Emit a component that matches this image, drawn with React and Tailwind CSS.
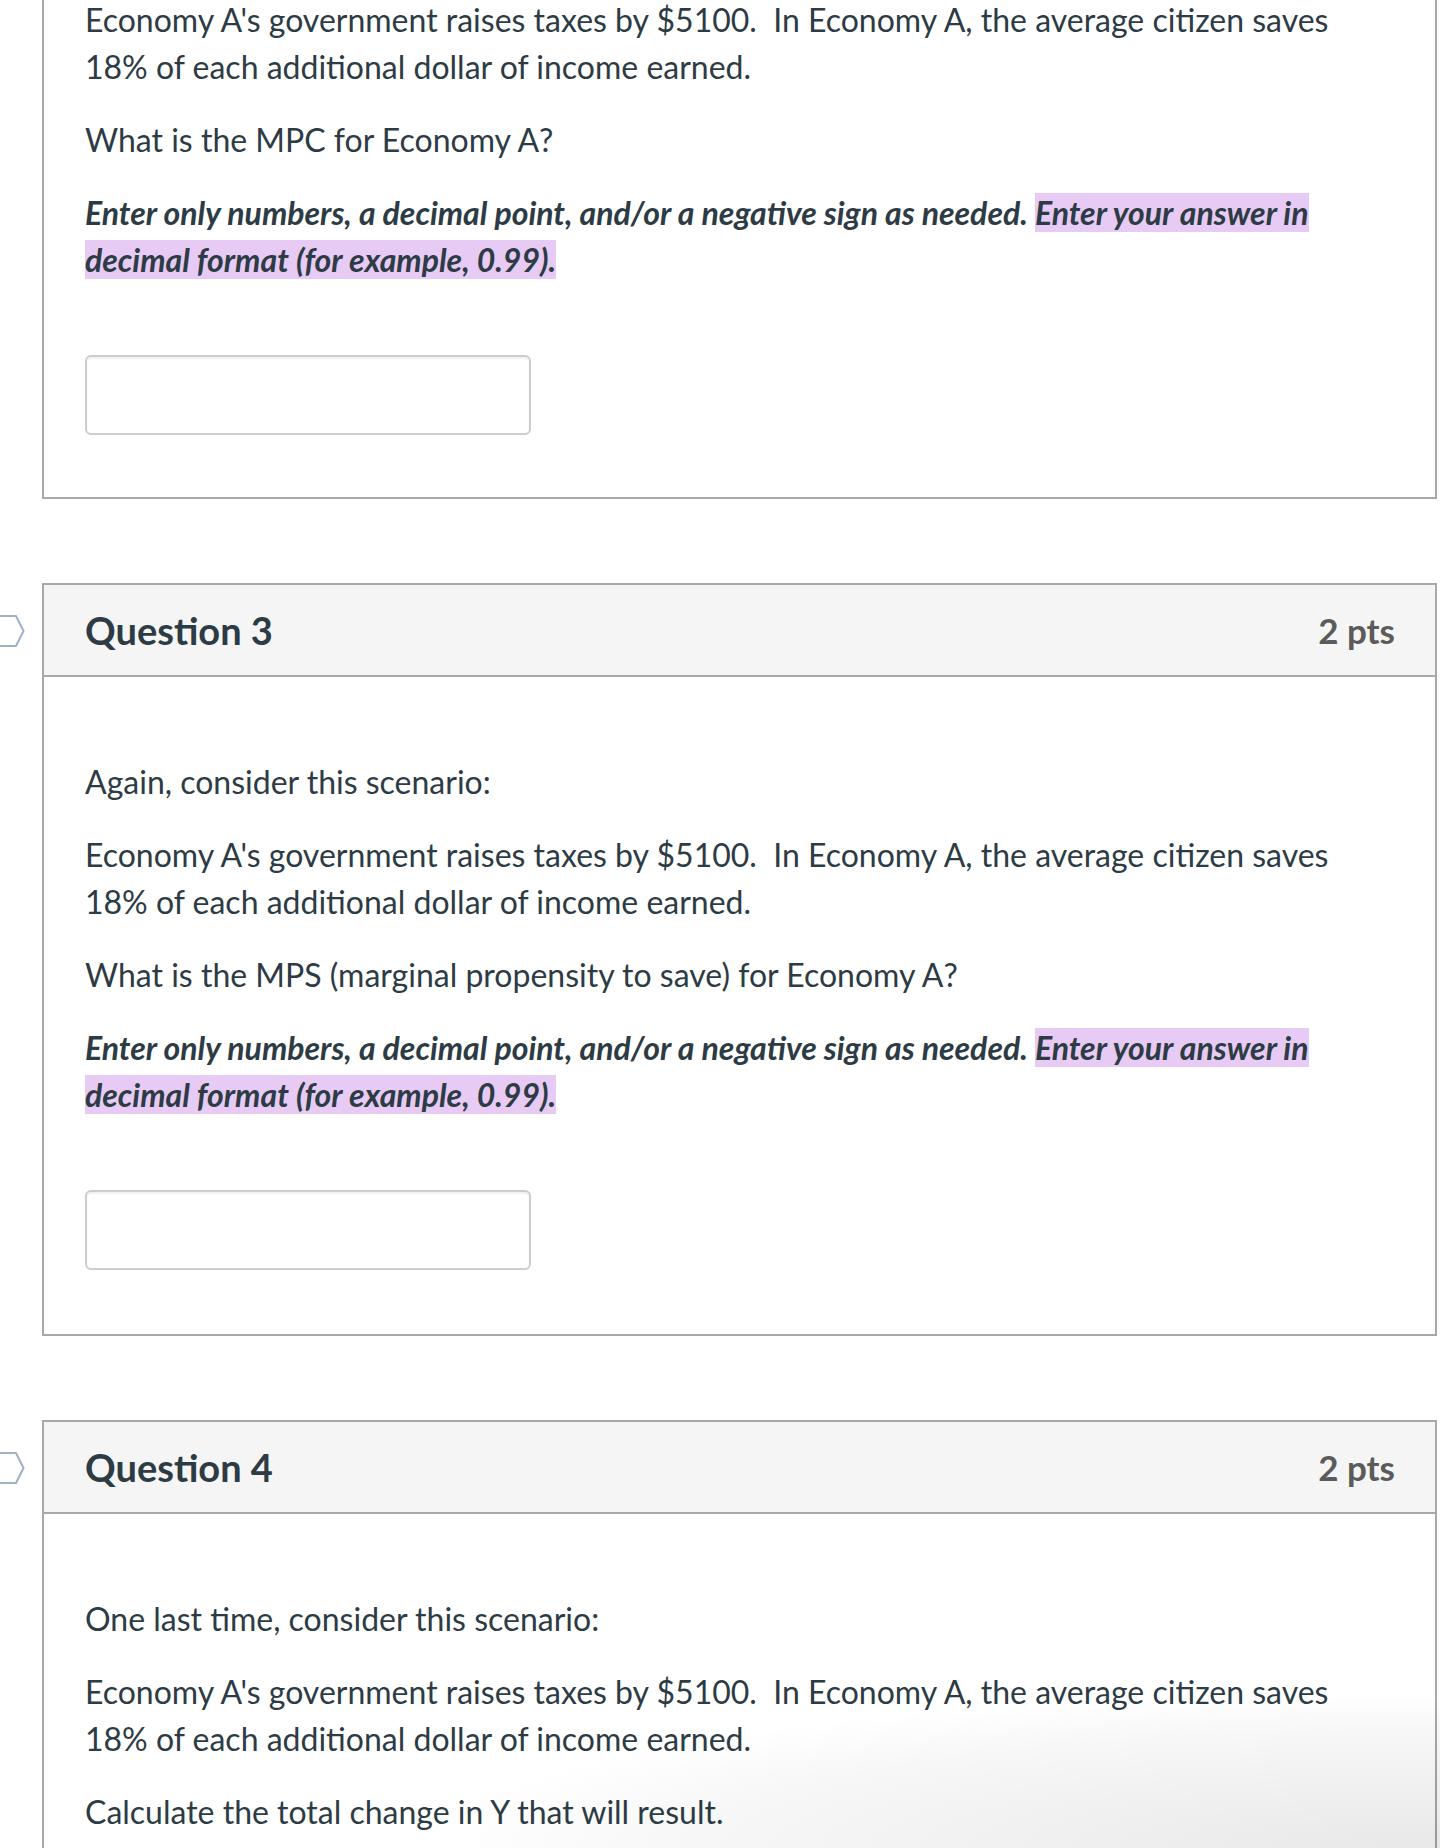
const TEXT = "text-[32px] leading-[47px] text-[#2d3b45]";

function Flag() {
  return (
    <svg className="absolute left-0 top-1/2 -translate-y-1/2" width="28" height="34" viewBox="0 0 28 34">
      <polygon points="-20,2 16,2 23.5,17 16,32 -20,32" fill="#ffffff" stroke="#9fb1c4" strokeWidth="2" strokeLinejoin="round" />
    </svg>
  );
}

function Instructions() {
  return (
    <p className={`${TEXT} font-bold italic`}>
      Enter only numbers, a decimal point, and/or a negative sign as needed.{" "}
      <span className="bg-[#e7cbf4] [box-decoration-break:clone]">
        Enter your answer in decimal format (for example, 0.99).
      </span>
    </p>
  );
}

function Scenario() {
  return (
    <p className={`${TEXT} mb-[26px]`}>
      Economy A's government raises taxes by $5100.&nbsp; In Economy A, the average citizen saves 18% of each additional dollar of income earned.
    </p>
  );
}

function AnswerBox() {
  return (
    <div className="mt-[72px] w-[446px] h-[80px] rounded-[6px] border-2 border-[#cdcdcd] bg-white shadow-[inset_0_2px_2px_rgba(0,0,0,0.06)]" />
  );
}

function QuestionCard({ number, points, children }) {
  return (
    <div className="relative mt-[84px]">
      <div className="absolute -left-[42px] top-0 h-[96px] w-[42px]">
        <Flag />
      </div>
      <div className="border-2 border-[#a8a8a8]">
        <div className="flex h-[92px] items-center justify-between border-b-2 border-[#a8a8a8] bg-[#f5f5f5] pl-[41px] pr-[40px]">
          <h2 className="text-[38px] font-bold text-[#2d3b45]">Question {number}</h2>
          <span className="text-[35px] font-bold text-[#5b5b5b]">{points} pts</span>
        </div>
        <div className="pl-[41px] pr-[80px] pt-[81px] pb-[64px]">{children}</div>
      </div>
    </div>
  );
}

export default function App() {
  return (
    <div className="relative h-[1848px] w-[1440px] overflow-hidden bg-white font-['Lato',sans-serif]">
      <div className="pl-[42px] pr-[3px]">
        {/* tail of question 2 */}
        <div className="border-2 border-t-0 border-[#a8a8a8] pl-[41px] pr-[80px] pb-[62px]">
          <div className="-mt-[4px]">
            <Scenario />
            <p className={`${TEXT} mb-[26px]`}>What is the MPC for Economy A?</p>
            <Instructions />
            <AnswerBox />
          </div>
        </div>

        <QuestionCard number={3} points={2}>
          <p className={`${TEXT} mb-[26px]`}>Again, consider this scenario:</p>
          <Scenario />
          <p className={`${TEXT} mb-[26px]`}>What is the MPS (marginal propensity to save) for Economy A?</p>
          <Instructions />
          <AnswerBox />
        </QuestionCard>

        <QuestionCard number={4} points={2}>
          <p className={`${TEXT} mb-[26px]`}>One last time, consider this scenario:</p>
          <Scenario />
          <p className={TEXT}>Calculate the total change in Y that will result.</p>
        </QuestionCard>
      </div>

      {/* soft shadow creeping in at the bottom */}
      <div className="pointer-events-none absolute bottom-0 right-0 h-[150px] w-[960px] bg-[radial-gradient(ellipse_at_bottom_right,rgba(0,0,0,0.09),rgba(0,0,0,0.03)_55%,transparent_75%)]" />
    </div>
  );
}
